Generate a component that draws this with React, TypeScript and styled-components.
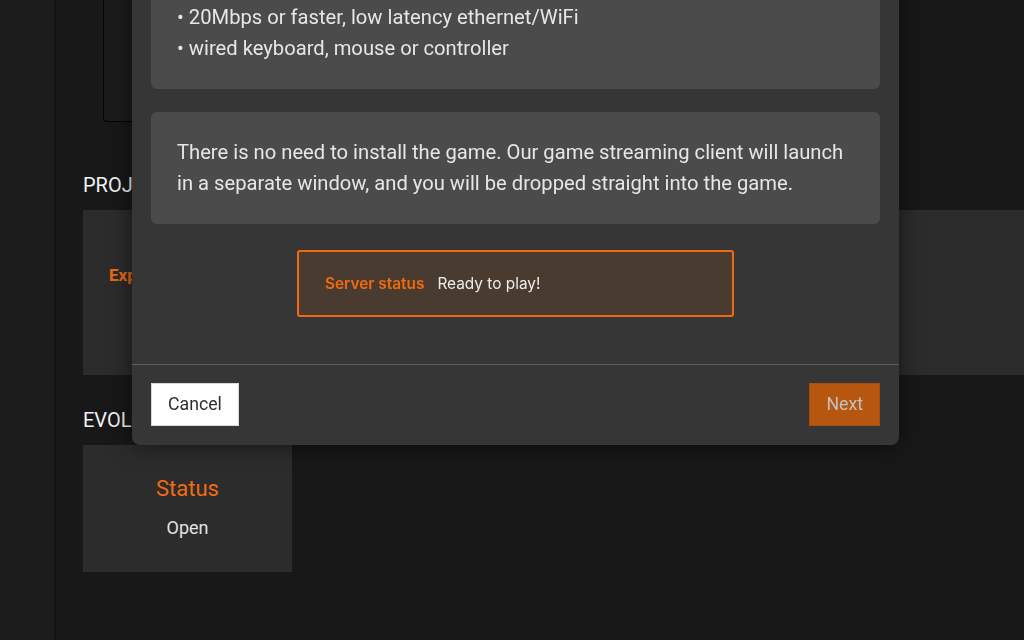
import React from "react";
import styled, { createGlobalStyle } from "styled-components";

const GlobalStyle = createGlobalStyle`
  html, body {
    margin: 0;
    padding: 0;
    background: #181818;
    font-family: Roboto, "Liberation Sans", sans-serif;
    overflow: hidden;
  }
`;

const Page = styled.div`
  display: flex;
  width: 1024px;
  height: 640px;
  background: #181818;
  overflow: hidden;
`;

const Sidebar = styled.div`
  width: 54px;
  flex-shrink: 0;
  background: #1c1c1c;
  border-right: 2px solid #141414;
`;

const Main = styled.div`
  flex: 1;
  display: flex;
  flex-direction: column;
  padding-left: 27px;
`;

const Cover = styled.div`
  margin-left: 20px;
  width: 320px;
  height: 122px;
  box-sizing: border-box;
  border: 1px solid #050505;
  border-top: none;
  border-radius: 0 0 4px 4px;
  background: linear-gradient(90deg, #1b1b1b, #222222);
`;

const Heading = styled.h2<{ $gap: number }>`
  margin: ${(p) => p.$gap}px 0 13px;
  font-size: 20px;
  line-height: 24px;
  font-weight: 400;
  color: #f2f2f2;
  text-transform: uppercase;
`;

const InfoCard = styled.div`
  height: 165px;
  box-sizing: border-box;
  background: #2c2c2c;
  display: flex;
  align-items: flex-start;
  padding: 54px 0 0 26px;
`;

const InfoLabel = styled.span`
  color: #ee6a12;
  font-weight: 700;
  font-size: 17px;
  line-height: 22px;
`;

const StatusCard = styled.div`
  width: 209px;
  height: 127px;
  box-sizing: border-box;
  padding-top: 30px;
  background: #2c2c2c;
  display: flex;
  flex-direction: column;
  align-items: center;
  gap: 14px;
`;

const StatusTitle = styled.div`
  color: #f26a12;
  font-size: 22px;
  line-height: 28px;
`;

const StatusValue = styled.div`
  color: #e2e2e2;
  font-size: 18px;
  line-height: 22px;
`;

const Modal = styled.div`
  position: fixed;
  left: 132px;
  top: -42px;
  width: 767px;
  background: #363636;
  border-radius: 0 0 8px 8px;
  box-shadow: 0 0 24px rgba(0, 0, 0, 0.55);
  display: flex;
  flex-direction: column;
`;

const ModalBody = styled.div`
  padding: 19px 19px 47px;
  display: flex;
  flex-direction: column;
  gap: 23px;
`;

const InfoBox = styled.div`
  background: #4b4b4b;
  border-radius: 6px;
  padding: 25px 26px;
  color: #e6e6e6;
  font-size: 20.2px;
  line-height: 31px;
`;

const Line = styled.div``;

const ServerBox = styled.div`
  align-self: center;
  margin-top: 3px;
  width: 437px;
  height: 67px;
  box-sizing: border-box;
  border: 2px solid #ef6a12;
  border-radius: 3px;
  background: #4a3b31;
  display: flex;
  align-items: center;
  gap: 13px;
  padding-left: 26px;
  font-family: Inter, "Liberation Sans", sans-serif;
  font-size: 15.4px;
`;

const ServerLabel = styled.span`
  color: #f06a10;
  font-weight: 600;
`;

const ServerValue = styled.span`
  color: #ececec;
`;

const Footer = styled.div`
  border-top: 1.5px solid #5e5e5e;
  padding: 18px 19px 19px;
  display: flex;
  justify-content: space-between;
`;

const Button = styled.button<{ $primary?: boolean }>`
  height: 43px;
  padding: 0 16px 1px;
  border: 1px solid ${(p) => (p.$primary ? "#a84e10" : "#d8d8d8")};
  border-radius: 0;
  background: ${(p) => (p.$primary ? "#b7560f" : "#ffffff")};
  color: ${(p) => (p.$primary ? "#c2c2c2" : "#2e2e2e")};
  font-family: Roboto, "Liberation Sans", sans-serif;
  font-size: 17.7px;
  cursor: pointer;
`;

export default function App() {
  return (
    <>
      <GlobalStyle />
      <Page>
        <Sidebar />
        <Main>
          <Cover />
          <Heading $gap={51}>Project</Heading>
          <InfoCard>
            <InfoLabel>Expected release</InfoLabel>
          </InfoCard>
          <Heading $gap={33}>Evolution</Heading>
          <StatusCard>
            <StatusTitle>Status</StatusTitle>
            <StatusValue>Open</StatusValue>
          </StatusCard>
        </Main>
      </Page>

      <Modal>
        <ModalBody>
          <InfoBox>
            <Line>• 20Mbps or faster, low latency ethernet/WiFi</Line>
            <Line>• wired keyboard, mouse or controller</Line>
          </InfoBox>
          <InfoBox>
            There is no need to install the game. Our game streaming client will launch
            in a separate window, and you will be dropped straight into the game.
          </InfoBox>
          <ServerBox>
            <ServerLabel>Server status</ServerLabel>
            <ServerValue>Ready to play!</ServerValue>
          </ServerBox>
        </ModalBody>
        <Footer>
          <Button>Cancel</Button>
          <Button $primary>Next</Button>
        </Footer>
      </Modal>
    </>
  );
}
